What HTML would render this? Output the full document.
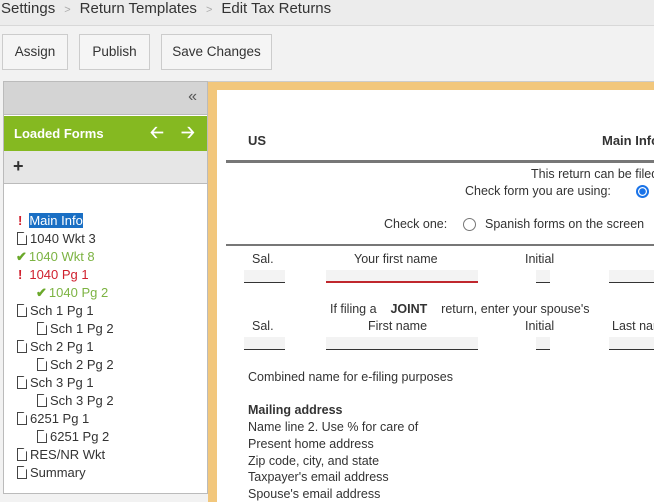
<!DOCTYPE html>
<html><head><style>
*{margin:0;padding:0;box-sizing:border-box}
body{width:654px;height:502px;overflow:hidden;background:#f2f2f2;font-family:"Liberation Sans",sans-serif;position:relative;color:#333}
.a{position:absolute;white-space:nowrap}
.bc{left:0;top:0;width:654px;height:26px;background:#ececec;border-bottom:1px solid #d8d8d8;font-size:15px;line-height:18px;padding-left:1px;color:#333}
.bc span.s{color:#aaa;font-size:11px;margin:0 9px}
.btn{top:34px;height:36px;border:1px solid #ccc;background:#f5f5f5;font-size:13.5px;line-height:34px;text-align:center;color:#333}
.lp{left:3px;top:81px;width:205px;height:413px;border:1px solid #bbb;background:#fff}
.doc{font-size:12.5px;color:#333}
.in{position:absolute;background:#f3f3f3;border-bottom:1.5px solid #333;height:13px}
.li{position:absolute;font-size:13px;line-height:18px;height:18px;white-space:nowrap}
.ic{display:inline-block;width:10px;height:13px;border:1px solid #444;vertical-align:-2px;margin-right:3px;position:relative;background:#fff;clip-path:polygon(0 0,65% 0,100% 30%,100% 100%,0 100%)}
.ck{color:#6aa82a;font-weight:bold;margin-right:2px}
</style></head><body>
<div class="a bc">Settings<span class="s">&gt;</span>Return Templates<span class="s">&gt;</span>Edit Tax Returns</div>
<div class="a btn" style="left:2px;width:66px">Assign</div>
<div class="a btn" style="left:79px;width:71px">Publish</div>
<div class="a btn" style="left:161px;width:111px">Save Changes</div>

<div class="a lp">
 <div class="a" style="left:0;top:0;width:203px;height:33px;background:#d4d4d4;border-bottom:1px solid #bbb"><span class="a" style="right:10px;top:6px;font-size:16px;color:#555">«</span></div>
 <div class="a" style="left:0;top:34px;width:203px;height:35px;background:#85b921;color:#fff;font-weight:bold;font-size:13px;line-height:35px;padding-left:10px">Loaded Forms<span class="a" style="left:146px;top:-1px;font-size:17px;font-weight:900">&#129120;</span><span class="a" style="left:177px;top:-1px;font-size:17px;font-weight:900">&#129122;</span></div>
 <div class="a" style="left:0;top:69px;width:203px;height:33px;background:#e6e6e6;border-bottom:1px solid #bbb;font-size:18px;font-weight:bold;line-height:31px;padding-left:9px;color:#333">+</div>
</div>
<div class="li" style="left:18px;top:212px"><b style="color:#d0202e;margin-right:7px">!</b><span style="background:#1a6fc4;color:#fff">Main Info</span></div>
<div class="li" style="left:17px;top:230px"><span class="ic"></span>1040 Wkt 3</div>
<div class="li" style="left:16px;top:248px;color:#7cb342"><span class="ck">&#10004;</span>1040 Wkt 8</div>
<div class="li" style="left:18px;top:266px;color:#d0202e"><b style="margin-right:7px">!</b>1040 Pg 1</div>
<div class="li" style="left:36px;top:284px;color:#7cb342"><span class="ck">&#10004;</span>1040 Pg 2</div>
<div class="li" style="left:17px;top:302px"><span class="ic"></span>Sch 1 Pg 1</div>
<div class="li" style="left:37px;top:320px"><span class="ic"></span>Sch 1 Pg 2</div>
<div class="li" style="left:17px;top:338px"><span class="ic"></span>Sch 2 Pg 1</div>
<div class="li" style="left:37px;top:356px"><span class="ic"></span>Sch 2 Pg 2</div>
<div class="li" style="left:17px;top:374px"><span class="ic"></span>Sch 3 Pg 1</div>
<div class="li" style="left:37px;top:392px"><span class="ic"></span>Sch 3 Pg 2</div>
<div class="li" style="left:17px;top:410px"><span class="ic"></span>6251 Pg 1</div>
<div class="li" style="left:37px;top:428px"><span class="ic"></span>6251 Pg 2</div>
<div class="li" style="left:17px;top:446px"><span class="ic"></span>RES/NR Wkt</div>
<div class="li" style="left:17px;top:464px"><span class="ic"></span>Summary</div>

<div class="a" style="left:208px;top:81px;width:446px;height:421px;background:#f2c77c;border-top:1px solid #ccc"></div>
<div class="a doc" style="left:217px;top:90px;width:437px;height:412px;background:#fff;overflow:hidden">
 <div class="a" style="left:31px;top:43px;font-weight:bold;font-size:13px">US</div>
 <div class="a" style="left:385px;top:43px;font-weight:bold;font-size:13px">Main Info</div>
 <div class="a" style="left:9px;top:70px;width:430px;height:3px;background:#777"></div>
 <div class="a" style="left:314px;top:77px">This return can be filed</div>
 <div class="a" style="left:248px;top:94px">Check form you are using:</div>
 <div class="a" style="left:419px;top:95px;width:13px;height:13px;border-radius:50%;border:2px solid #1a73e8;background:radial-gradient(#1a73e8 3px,#fff 3.5px)"></div>
 <div class="a" style="left:167px;top:127px">Check one:</div>
 <div class="a" style="left:246px;top:128px;width:13px;height:13px;border-radius:50%;border:1px solid #777"></div>
 <div class="a" style="left:268px;top:127px">Spanish forms on the screen</div>
 <div class="a" style="left:9px;top:154px;width:430px;height:2px;background:#777"></div>
 <div class="a" style="left:35px;top:162px">Sal.</div>
 <div class="a" style="left:137px;top:162px">Your first name</div>
 <div class="a" style="left:308px;top:162px">Initial</div>
 <div class="in" style="left:27px;top:180px;width:41px"></div>
 <div class="in" style="left:109px;top:180px;width:152px;border-bottom:2px solid #c0272d"></div>
 <div class="in" style="left:319px;top:180px;width:14px"></div>
 <div class="in" style="left:392px;top:180px;width:50px"></div>
 <div class="a" style="left:113px;top:212px">If filing a &nbsp;&nbsp;&nbsp;<b>JOINT</b>&nbsp;&nbsp;&nbsp; return, enter your spouse's</div>
 <div class="a" style="left:35px;top:229px">Sal.</div>
 <div class="a" style="left:151px;top:229px">First name</div>
 <div class="a" style="left:308px;top:229px">Initial</div>
 <div class="a" style="left:395px;top:229px">Last name</div>
 <div class="in" style="left:27px;top:247px;width:41px"></div>
 <div class="in" style="left:109px;top:247px;width:152px"></div>
 <div class="in" style="left:319px;top:247px;width:14px"></div>
 <div class="in" style="left:392px;top:247px;width:50px"></div>
 <div class="a" style="left:31px;top:280px">Combined name for e-filing purposes</div>
 <div class="a" style="left:31px;top:313px;font-weight:bold">Mailing address</div>
 <div class="a" style="left:31px;top:330px">Name line 2. Use % for care of</div>
 <div class="a" style="left:31px;top:347px">Present home address</div>
 <div class="a" style="left:31px;top:364px">Zip code, city, and state</div>
 <div class="a" style="left:31px;top:380px">Taxpayer's email address</div>
 <div class="a" style="left:31px;top:397px">Spouse's email address</div>
</div>
</body></html>
